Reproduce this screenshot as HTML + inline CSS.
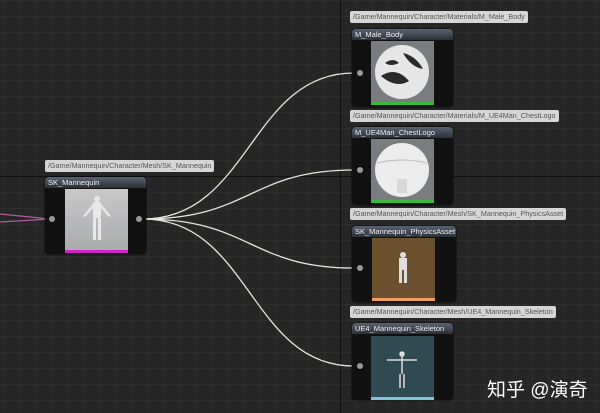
<!DOCTYPE html>
<html><head><meta charset="utf-8"><style>
body{margin:0;width:600px;height:413px;overflow:hidden;position:relative;font-family:"Liberation Sans",sans-serif;
background-color:#262626;
background-image:linear-gradient(#2e2e2e 1px,transparent 1px),linear-gradient(90deg,#2e2e2e 1px,transparent 1px);
background-size:16px 16px;background-position:4px 0}
.hl{position:absolute;left:0;width:600px;height:1px;background:#111;top:176px}
.vl{position:absolute;top:0;height:413px;width:1px;background:#111;left:340px}
.tip{position:absolute;height:12px;background:#d6d6d6;color:#555;font-size:7.2px;line-height:12px;padding:0 3px;border-radius:2px;white-space:nowrap}
.node{position:absolute;background:#111;border-radius:4px;box-shadow:0 0 2px #000}
.hd{position:absolute;left:0;right:0;top:0;height:11px;background:linear-gradient(#5a6373,#2b3038);color:#eee;font-size:7.5px;line-height:11px;padding-left:3px;border-radius:4px 4px 0 0}
.th{position:absolute}
.bar{position:absolute;left:0;right:0;bottom:0;height:3px}
.pin{position:absolute;width:6px;height:6px;border-radius:3px;background:#999}
.wm{position:absolute;left:487px;top:375px;color:#fff;font-size:19px;font-family:"Liberation Sans","Noto Sans CJK SC",sans-serif}
</style></head><body>
<div class="hl"></div><div class="vl"></div>
<svg width="600" height="413" style="position:absolute;left:0;top:0">
<g fill="none" stroke="#e6e6dc" stroke-width="1.3">
<path d="M143 219 C250 219 250 73 354 73"/>
<path d="M143 219 C250 219 250 170 354 170"/>
<path d="M143 219 C250 219 250 268 354 268"/>
<path d="M143 219 C250 219 250 366 354 366"/>
</g>
<path d="M0 214 L50 219 M0 222 L50 219" stroke="#b05aa0" stroke-width="1.2" fill="none"/>
</svg>

<div class="tip" style="left:45px;top:160px">/Game/Mannequin/Character/Mesh/SK_Mannequin</div>
<div class="node" style="left:45px;top:177px;width:101px;height:77px"><div class="hd">SK_Mannequin</div>
<div class="th" style="left:20px;top:12px;width:63px;height:64px;background:linear-gradient(#c8c8c8,#a9aaad)">
<svg width="63" height="60"><g fill="#e8e8e8"><circle cx="32" cy="10" r="3"/><rect x="28" y="13" width="8" height="16" rx="2"/><path d="M28 15 L18 27 L20 28 L29 18Z M36 15 L46 27 L44 28 L35 18Z"/><rect x="28" y="29" width="3" height="22"/><rect x="33" y="29" width="3" height="22"/></g></svg>
<div class="bar" style="background:#d021c8"></div></div>
<div class="pin" style="left:4px;top:39px"></div><div class="pin" style="left:91px;top:39px"></div></div>

<div class="tip" style="left:350px;top:11px">/Game/Mannequin/Character/Materials/M_Male_Body</div>
<div class="node" style="left:352px;top:29px;width:101px;height:78px"><div class="hd">M_Male_Body</div>
<div class="th" style="left:19px;top:12px;width:63px;height:64px;background:#7a7c80">
<svg width="63" height="61"><circle cx="31" cy="31" r="27" fill="#e6e6e6"/><path d="M10 35 Q25 25 38 40 Q25 48 10 35Z M32 12 Q45 15 52 28 Q40 26 32 12Z M14 22 Q22 16 28 22 Q20 26 14 22Z" fill="#2a2a2a"/></svg>
<div class="bar" style="background:#3bbb3b"></div></div>
<div class="pin" style="left:5px;top:41px"></div></div>

<div class="tip" style="left:350px;top:110px">/Game/Mannequin/Character/Materials/M_UE4Man_ChestLogo</div>
<div class="node" style="left:352px;top:127px;width:101px;height:78px"><div class="hd">M_UE4Man_ChestLogo</div>
<div class="th" style="left:19px;top:12px;width:63px;height:64px;background:#7a7c80">
<svg width="63" height="61"><circle cx="31" cy="31" r="27" fill="#ececec"/><path d="M6 24 Q31 18 56 24" stroke="#bbb" fill="none"/><rect x="26" y="40" width="10" height="14" fill="#d8d8d8"/></svg>
<div class="bar" style="background:#3bbb3b"></div></div>
<div class="pin" style="left:5px;top:40px"></div></div>

<div class="tip" style="left:350px;top:208px">/Game/Mannequin/Character/Mesh/SK_Mannequin_PhysicsAsset</div>
<div class="node" style="left:352px;top:226px;width:104px;height:76px"><div class="hd">SK_Mannequin_PhysicsAsset</div>
<div class="th" style="left:20px;top:12px;width:63px;height:63px;background:#6b5030">
<svg width="63" height="60"><g fill="#ddd"><circle cx="31" cy="17" r="3"/><rect x="27" y="20" width="8" height="12"/><rect x="27" y="32" width="3" height="13"/><rect x="32" y="32" width="3" height="13"/></g></svg>
<div class="bar" style="background:#f0a060"></div></div>
<div class="pin" style="left:5px;top:39px"></div></div>

<div class="tip" style="left:350px;top:306px">/Game/Mannequin/Character/Mesh/UE4_Mannequin_Skeleton</div>
<div class="node" style="left:352px;top:323px;width:101px;height:77px"><div class="hd">UE4_Mannequin_Skeleton</div>
<div class="th" style="left:19px;top:13px;width:63px;height:64px;background:#2f4a52">
<svg width="63" height="60"><g stroke="#ddd" stroke-width="1.5" fill="none"><circle cx="31" cy="18" r="2" fill="#ddd"/><path d="M16 24 L46 24 M31 20 L31 38 M29 38 L29 52 M33 38 L33 52"/></g></svg>
<div class="bar" style="background:#7fc4e0"></div></div>
<div class="pin" style="left:5px;top:40px"></div></div>

<div class="wm">知乎 @演奇</div>
</body></html>
